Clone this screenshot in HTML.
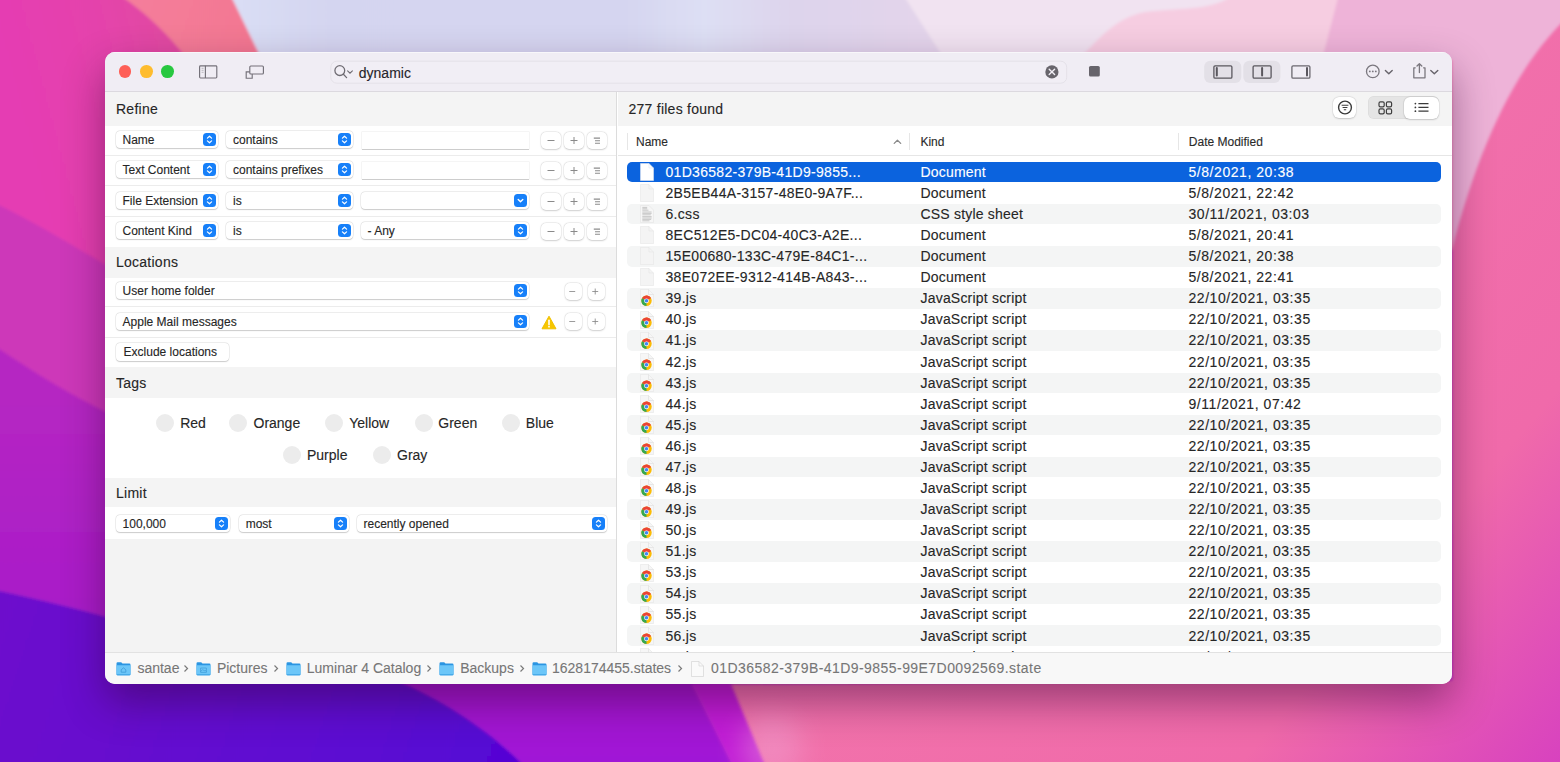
<!DOCTYPE html>
<html><head><meta charset="utf-8"><style>
*{margin:0;padding:0;box-sizing:border-box}
html,body{width:1560px;height:762px;overflow:hidden;font-family:"Liberation Sans",sans-serif;color:#262626}
#win div,#win span{-webkit-text-stroke:0.12px currentColor;font-variant-ligatures:none}
#win .bc{-webkit-text-stroke:0.1px currentColor}
#bg{position:absolute;left:0;top:0}
#win{position:absolute;left:105px;top:52px;width:1347px;height:632px;border-radius:10px;overflow:hidden;background:#f3f3f3;
 box-shadow:0 18px 40px rgba(50,0,50,0.45)}
.abs{position:absolute}
#tb{position:absolute;left:0;top:0;width:1347px;height:40px;background:#f0edf4;border-bottom:1px solid #dcd9df;box-shadow:inset 0 1px 0 rgba(255,255,255,0.55)}
.tl{position:absolute;top:13.4px;width:12.8px;height:12.8px;border-radius:50%}
#lp{position:absolute;left:0;top:40px;width:511.5px;height:560px;background:#f3f3f3}
#rp{position:absolute;left:512px;top:40px;width:835px;height:560px;background:#ffffff;border-left:1px solid #dedede}
.hdr{position:absolute;left:0;width:100%;background:#f4f4f4;font-size:14px;color:#262626}
.hdr span{position:absolute;left:11px;letter-spacing:0.25px}
.wrow{position:absolute;left:0;width:100%;background:#fff;border-bottom:1px solid #ececec}
.pop{position:absolute;background:#fff;border-radius:4px;box-shadow:0 0 0 0.5px rgba(0,0,0,0.10),0 0.8px 1.2px rgba(0,0,0,0.16)}
.pt{position:absolute;left:7px;top:2.1px;font-size:12px;color:#262626;white-space:nowrap}
.stp{position:absolute;right:2px;top:2px;width:13px;height:13px;border-radius:3.5px;background:#1780f9}
.stp svg{position:absolute;left:0;top:0}
.fld{position:absolute;height:17px;background:#fff;box-shadow:0 0 0 0.5px rgba(0,0,0,0.08),0 1px 0 rgba(0,0,0,0.16)}
.sb{position:absolute;background:#fff;border-radius:5px;box-shadow:0 0 0 0.5px rgba(0,0,0,0.07),0 0.6px 1.8px rgba(0,0,0,0.16)}
.sb svg{position:absolute;left:0;top:0}
.tag{position:absolute;font-size:14px;color:#262626}
.tag i{position:absolute;width:17.6px;height:17.6px;border-radius:50%;background:#ececec}
.row{position:absolute;left:10px;width:814px;height:20.6px;border-radius:5px;font-size:14px;color:#262626;white-space:nowrap}
.row.alt{background:#f4f5f5}
.row.sel{background:#0b63de;color:#fff}
.row .ic{position:absolute;left:11.5px;top:1.3px}
.row span{position:absolute;top:2.1px}
.c1{left:38.5px;letter-spacing:0.3px}
.c2{left:293.5px;letter-spacing:0.2px}
.c3{left:561.5px;letter-spacing:0.55px}
.colh{position:absolute;font-size:12px;color:#2a2a2a;white-space:nowrap}
.bc{position:absolute;font-size:14px;color:#767676;white-space:nowrap}
</style></head><body>
<svg id="bg" width="1560" height="762" viewBox="0 0 1560 762">
 <defs>
  <filter id="bl" x="-10%" y="-10%" width="120%" height="120%"><feGaussianBlur stdDeviation="1.5"/></filter>
  <filter id="bl2" x="-50%" y="-50%" width="200%" height="200%"><feGaussianBlur stdDeviation="14"/></filter>
  <linearGradient id="gL" x1="0" y1="0" x2="0" y2="1"><stop offset="0" stop-color="#e53db3"/><stop offset="1" stop-color="#e33ab2"/></linearGradient>
  <linearGradient id="gPink" gradientUnits="userSpaceOnUse" x1="900" y1="200" x2="1560" y2="762"><stop offset="0" stop-color="#f377ab"/><stop offset="0.72" stop-color="#f06aaa"/><stop offset="1" stop-color="#d842bf"/></linearGradient>
  <linearGradient id="gLav" gradientUnits="userSpaceOnUse" x1="228" y1="0" x2="950" y2="0"><stop offset="0" stop-color="#dadef5"/><stop offset="0.14" stop-color="#d4d5f0"/><stop offset="0.55" stop-color="#d5d5f0"/><stop offset="0.66" stop-color="#dddff4"/><stop offset="0.78" stop-color="#ddd4ec"/><stop offset="1" stop-color="#e4d4ea"/></linearGradient>
  <linearGradient id="gMag" gradientUnits="userSpaceOnUse" x1="0" y1="400" x2="0" y2="762"><stop offset="0" stop-color="#b526c2"/><stop offset="0.6" stop-color="#a81bc9"/><stop offset="1" stop-color="#a012d6"/></linearGradient>
  <linearGradient id="gPur" gradientUnits="userSpaceOnUse" x1="0" y1="600" x2="500" y2="762"><stop offset="0" stop-color="#6d10cc"/><stop offset="1" stop-color="#5506d4"/></linearGradient>
  <linearGradient id="gTL" gradientUnits="userSpaceOnUse" x1="0" y1="60" x2="190" y2="10"><stop offset="0" stop-color="#e53cb3"/><stop offset="0.55" stop-color="#e443ab"/><stop offset="1" stop-color="#df4b9d"/></linearGradient>
  <linearGradient id="gSal" gradientUnits="userSpaceOnUse" x1="120" y1="0" x2="260" y2="50"><stop offset="0" stop-color="#f47e9c"/><stop offset="1" stop-color="#f37690"/></linearGradient>
 </defs>
 <rect width="1560" height="762" fill="url(#gPink)"/>
 <g filter="url(#bl)">
 <path d="M-10 -10H1340L1320 60L1452 250L1452 680L692 684L735 770H-10Z" fill="url(#gMag)"/>
 <path d="M692 684L731 684L767 770L735 770Z" fill="#c11fd6"/>
 <path d="M-10 -10H250L275 60L110 268C80 250 40 225 -10 201Z" fill="url(#gTL)"/>
 <path d="M-10 201C40 225 80 250 110 268L110 414C70 395 30 370 -10 343Z" fill="#cd37b9"/>
 <path d="M-10 589Q60 604 110 618L395 680C445 700 495 735 528 770L-10 770Z" fill="url(#gPur)"/>
 <path d="M112 -10C140 8 165 30 188 60L270 60L240 -10Z" fill="url(#gSal)"/>
 <path d="M228 -10L905 -10L950 60L262 60Z" fill="url(#gLav)"/>
 <path d="M900 -10L1345 -10L1325 60L945 60Z" fill="#f1e3f1"/>
 <path d="M1078 60C1100 38 1115 18 1145 12C1180 8 1205 10 1225 0L1240 -10L1345 -10L1325 60Z" fill="#f6cde1"/>
 <path d="M1340 -10L1570 -10L1570 15C1520 60 1480 140 1452 250L1452 60L1322 60Z" fill="#eeb3d8"/>
 </g>
 <ellipse cx="772" cy="748" rx="30" ry="34" fill="#f0a8d8" opacity="0.4" filter="url(#bl2)"/>
</svg>
<div id="win">
 <div id="tb">
  <div class="tl" style="left:13.5px;background:#fe5f57"></div>
  <div class="tl" style="left:34.8px;background:#febc2e"></div>
  <div class="tl" style="left:55.8px;background:#28c840"></div>
  <svg class="abs" style="left:0;top:0" width="1347" height="40" viewBox="0 0 1347 40">
   <g fill="none" stroke="#747179" stroke-width="1.15">
    <rect x="94.6" y="13.8" width="17.2" height="12.2" rx="0.9"/>
    <path d="M100.4 13.8V26"/>
    <path d="M96.6 16.3H98.6M96.6 18.3H98.6M96.6 20.3H98.6" stroke="#b5b2b8" stroke-width="0.9"/>
    <rect x="144.8" y="14" width="13.6" height="8" rx="1"/>
    <path d="M144.8 19.8H141.2V26.2H147.2V22" />
   </g>
   <rect x="225.8" y="9.2" width="735.9" height="22" rx="6" fill="#f1eef5" stroke="#e4e1e8" stroke-width="1"/>
   <g fill="none" stroke="#6f6c73" stroke-width="1.3" stroke-linecap="round">
    <circle cx="234.8" cy="18.6" r="4.9"/>
    <path d="M238.4 22.3L241.6 25.6"/>
    <path d="M242.6 18.8L245 21.2L247.4 18.8" stroke-width="1.1"/>
   </g>
   <circle cx="946.9" cy="19.9" r="6.6" fill="#68656c"/>
   <path d="M944.2 17.2L949.6 22.6M949.6 17.2L944.2 22.6" stroke="#f1eef5" stroke-width="1.4" stroke-linecap="round"/>
   <rect x="984" y="14" width="10.8" height="10.5" rx="1.6" fill="#67646b"/>
   <rect x="1099.2" y="8.8" width="37.1" height="22.1" rx="6" fill="#e3e0e7"/>
   <rect x="1138.3" y="8.8" width="37.1" height="22.1" rx="6" fill="#e3e0e7"/>
   <g fill="none" stroke="#5a575e" stroke-width="1.3">
    <rect x="1108.9" y="13.8" width="18" height="12.4" rx="1.2"/>
    <rect x="1148.1" y="13.8" width="18" height="12.4" rx="1.2"/>
    <rect x="1186.9" y="13.8" width="18" height="12.4" rx="1.2" stroke="#6b686f"/>
   </g>
   <g stroke="#5a575e" stroke-width="2" stroke-linecap="round">
    <path d="M1111.8 16V23.6M1157.1 16V23.6M1202 16V23.6"/>
   </g>
   <g fill="none" stroke="#7a777e" stroke-width="1.3" stroke-linecap="round" stroke-linejoin="round">
    <circle cx="1267.8" cy="19.4" r="6.3"/>
    <path d="M1280.4 18.4L1283.8 21.8L1287.2 18.4" stroke="#67646b" stroke-width="1.4"/>
    <path d="M1310.2 15.8H1308.8V25.8H1320V15.8H1318.6"/>
    <path d="M1314.4 11.6V20.6M1312 14L1314.4 11.6L1316.8 14"/>
    <path d="M1325.8 18.4L1329.3 21.8L1332.8 18.4" stroke="#67646b" stroke-width="1.4"/>
   </g>
   <g fill="#7a777e"><circle cx="1264.8" cy="19.4" r="0.9"/><circle cx="1267.8" cy="19.4" r="0.9"/><circle cx="1270.8" cy="19.4" r="0.9"/></g>
  </svg>
  <div class="abs" style="left:253.8px;top:12.8px;font-size:14px;color:#26242a">dynamic</div>
 </div>
 
 <div class="abs" style="left:0;top:40px;width:511.5px;height:560.2px;background:#f3f3f3"></div>
 <div class="hdr" style="top:40px;height:33.5px;width:511.5px"><span style="top:8.5px">Refine</span></div>
 <div class="wrow" style="top:73.5px;height:30.4px;width:511.5px"></div>
 <div class="wrow" style="top:103.9px;height:30.4px;width:511.5px"></div>
 <div class="wrow" style="top:134.3px;height:30.4px;width:511.5px"></div>
 <div class="wrow" style="top:164.7px;height:30.3px;width:511.5px;border-bottom:none"></div>
 <div class="hdr" style="top:195px;height:30.5px;width:511.5px"><span style="top:7px">Locations</span></div>
 <div class="wrow" style="top:225.5px;height:29.5px;width:511.5px"></div>
 <div class="wrow" style="top:255px;height:30.5px;width:511.5px"></div>
 <div class="wrow" style="top:285.5px;height:29.5px;width:511.5px;border-bottom:none"></div>
 <div class="hdr" style="top:315px;height:31.3px;width:511.5px"><span style="top:7.5px">Tags</span></div>
 <div class="wrow" style="top:346.3px;height:79.9px;width:511.5px;border-bottom:none"></div>
 <div class="hdr" style="top:426.2px;height:29px;width:511.5px"><span style="top:6.5px">Limit</span></div>
 <div class="wrow" style="top:455.2px;height:31.4px;width:511.5px;border-bottom:none"></div>
 <div class="abs" style="left:511px;top:40px;width:1px;height:560.2px;background:#dcdcdc"></div>
 <div class="abs" style="left:512px;top:40px;width:835px;height:560.2px;background:#fff"></div>
 <div class="hdr" style="left:512.5px;top:40px;height:33.5px;width:834.5px"><span style="top:8.5px">277 files found</span></div>
 <div class="abs" style="left:512.5px;top:73.5px;width:834.5px;height:30px;background:#fff;border-bottom:1px solid #e6e6e6"></div>
 <div class="colh" style="left:531px;top:82.6px">Name</div>
 <div class="colh" style="left:815.4px;top:82.6px">Kind</div>
 <div class="colh" style="left:1083.8px;top:82.6px">Date Modified</div>
 <div class="abs" style="left:521.5px;top:81px;width:1px;height:16.8px;background:#e6e6e6"></div>
 <div class="abs" style="left:804.2px;top:81px;width:1px;height:16.8px;background:#e6e6e6"></div>
 <div class="abs" style="left:1072.7px;top:81px;width:1px;height:16.8px;background:#e6e6e6"></div>
 <svg class="abs" style="left:788px;top:86px" width="9" height="7" viewBox="0 0 9 7"><path d="M1.2 5.4L4.45 2.2L7.7 5.4" fill="none" stroke="#8a8a8a" stroke-width="1.3" stroke-linecap="round" stroke-linejoin="round"/></svg>
 <div class="abs" style="left:0;top:600.2px;width:1347px;height:31.8px;background:#f8f8f8;border-top:1px solid #e2e2e2"></div>
 <div class="sb" style="left:1228px;top:44.8px;width:23.3px;height:21.6px;border-radius:6px"></div>
 <div class="abs" style="left:1262.5px;top:44.4px;width:71.3px;height:22.4px;border-radius:6px;background:#e5e5e5;box-shadow:inset 0 0 0 0.5px rgba(0,0,0,0.06)"></div>
 <div class="sb" style="left:1299px;top:44.6px;width:34.6px;height:22px;border-radius:6px"></div>
 <svg class="abs" style="left:1200px;top:40px" width="147" height="34" viewBox="1200 40 147 34">
  <circle cx="1240" cy="55.5" r="6.4" fill="none" stroke="#3c3c3c" stroke-width="1.4"/>
  <path d="M1236.6 53.3H1243.4M1237.6 55.5H1242.4M1238.8 57.7H1241.2" stroke="#3c3c3c" stroke-width="1.1"/>
  <g fill="none" stroke="#3f3f3f" stroke-width="1.2">
   <rect x="1274" y="49.8" width="5.2" height="5" rx="1.4"/><rect x="1281.4" y="49.8" width="5.2" height="5" rx="1.4"/>
   <rect x="1274" y="56.9" width="5.2" height="5" rx="1.4"/><rect x="1281.4" y="56.9" width="5.2" height="5" rx="1.4"/>
  </g>
  <g stroke="#3a3a3a" stroke-width="1.3">
   <path d="M1313.4 51.6H1323.5M1313.4 55.4H1323.5M1313.4 59.2H1323.5"/>
  </g>
  <g fill="#3a3a3a"><circle cx="1310.4" cy="51.6" r="0.9"/><circle cx="1310.4" cy="55.4" r="0.9"/><circle cx="1310.4" cy="59.2" r="0.9"/></g>
 </svg>
 <div class="bc" style="left:32.4px;top:608.3px">santae</div>
 <div class="bc" style="left:111.9px;top:608.3px">Pictures</div>
 <div class="bc" style="left:201.8px;top:608.3px">Luminar 4 Catalog</div>
 <div class="bc" style="left:355.2px;top:608.3px">Backups</div>
 <div class="bc" style="left:447px;top:608.3px">1628174455.states</div>
 <div class="bc" style="left:606px;top:608.3px;letter-spacing:0.44px">01D36582-379B-41D9-9855-99E7D0092569.state</div>
 <svg class="abs" style="left:78px;top:612px" width="6" height="9" viewBox="0 0 6 9"><path d="M1.5 1.5L4.5 4.5L1.5 7.5" fill="none" stroke="#7a7a7a" stroke-width="1.2"/></svg>
 <svg class="abs" style="left:168px;top:612px" width="6" height="9" viewBox="0 0 6 9"><path d="M1.5 1.5L4.5 4.5L1.5 7.5" fill="none" stroke="#7a7a7a" stroke-width="1.2"/></svg>
 <svg class="abs" style="left:321px;top:612px" width="6" height="9" viewBox="0 0 6 9"><path d="M1.5 1.5L4.5 4.5L1.5 7.5" fill="none" stroke="#7a7a7a" stroke-width="1.2"/></svg>
 <svg class="abs" style="left:413.5px;top:612px" width="6" height="9" viewBox="0 0 6 9"><path d="M1.5 1.5L4.5 4.5L1.5 7.5" fill="none" stroke="#7a7a7a" stroke-width="1.2"/></svg>
 <svg class="abs" style="left:571.5px;top:612px" width="6" height="9" viewBox="0 0 6 9"><path d="M1.5 1.5L4.5 4.5L1.5 7.5" fill="none" stroke="#7a7a7a" stroke-width="1.2"/></svg>
 <svg class="abs" style="left:11.4px;top:609px" width="15" height="15" viewBox="0 0 15 15"><path d="M0.5 2.4Q0.5 1.2 1.7 1.2H5.2L6.5 2.6H13.3Q14.5 2.6 14.5 3.8V13Q14.5 14.2 13.3 14.2H1.7Q0.5 14.2 0.5 13Z" fill="#2b95e2"/><path d="M0.5 4.3H14.5V13Q14.5 14.2 13.3 14.2H1.7Q0.5 14.2 0.5 13Z" fill="#6cc6f8"/><path d="M0.8 13.7H14.2" stroke="#3aa0e4" stroke-width="0.9"/><path d="M5.2 8.8L7.5 6.8L9.8 8.8V11.2H5.2Z" fill="none" stroke="#3d9bd8" stroke-width="0.8"/></svg>
 <svg class="abs" style="left:91.1px;top:609px" width="15" height="15" viewBox="0 0 15 15"><path d="M0.5 2.4Q0.5 1.2 1.7 1.2H5.2L6.5 2.6H13.3Q14.5 2.6 14.5 3.8V13Q14.5 14.2 13.3 14.2H1.7Q0.5 14.2 0.5 13Z" fill="#2b95e2"/><path d="M0.5 4.3H14.5V13Q14.5 14.2 13.3 14.2H1.7Q0.5 14.2 0.5 13Z" fill="#6cc6f8"/><path d="M0.8 13.7H14.2" stroke="#3aa0e4" stroke-width="0.9"/><path d="M4.6 7H10.4V11.4H4.6Z M4.6 10.4L6.8 8.6L8.2 9.8L9 9.2L10.4 10.4" fill="none" stroke="#3d9bd8" stroke-width="0.7"/></svg>
 <svg class="abs" style="left:180.5px;top:609px" width="15" height="15" viewBox="0 0 15 15"><path d="M0.5 2.4Q0.5 1.2 1.7 1.2H5.2L6.5 2.6H13.3Q14.5 2.6 14.5 3.8V13Q14.5 14.2 13.3 14.2H1.7Q0.5 14.2 0.5 13Z" fill="#2b95e2"/><path d="M0.5 4.3H14.5V13Q14.5 14.2 13.3 14.2H1.7Q0.5 14.2 0.5 13Z" fill="#6cc6f8"/><path d="M0.8 13.7H14.2" stroke="#3aa0e4" stroke-width="0.9"/></svg>
 <svg class="abs" style="left:334.2px;top:609px" width="15" height="15" viewBox="0 0 15 15"><path d="M0.5 2.4Q0.5 1.2 1.7 1.2H5.2L6.5 2.6H13.3Q14.5 2.6 14.5 3.8V13Q14.5 14.2 13.3 14.2H1.7Q0.5 14.2 0.5 13Z" fill="#2b95e2"/><path d="M0.5 4.3H14.5V13Q14.5 14.2 13.3 14.2H1.7Q0.5 14.2 0.5 13Z" fill="#6cc6f8"/><path d="M0.8 13.7H14.2" stroke="#3aa0e4" stroke-width="0.9"/></svg>
 <svg class="abs" style="left:426.6px;top:609px" width="15" height="15" viewBox="0 0 15 15"><path d="M0.5 2.4Q0.5 1.2 1.7 1.2H5.2L6.5 2.6H13.3Q14.5 2.6 14.5 3.8V13Q14.5 14.2 13.3 14.2H1.7Q0.5 14.2 0.5 13Z" fill="#2b95e2"/><path d="M0.5 4.3H14.5V13Q14.5 14.2 13.3 14.2H1.7Q0.5 14.2 0.5 13Z" fill="#6cc6f8"/><path d="M0.8 13.7H14.2" stroke="#3aa0e4" stroke-width="0.9"/></svg>
 <svg class="abs" style="left:586px;top:608.5px" width="13" height="16" viewBox="0 0 13 16"><path d="M0.5 0.5H8L12.5 5V15.5H0.5Z" fill="#fafafa" stroke="#d6d6d6" stroke-width="0.7"/><path d="M8 0.5V5H12.5" fill="none" stroke="#d6d6d6" stroke-width="0.7"/></svg>
 <div class="abs" style="left:0;top:0;width:1347px;height:632px">
 <div class="pop" style="left:10.5px;top:78.8px;width:102.5px;height:17px"><span class="pt">Name</span><span class="stp"><svg width="13" height="13" viewBox="0 0 13 13"><path d="M4.4 5.1L6.5 3.2L8.6 5.1M4.4 7.9L6.5 9.8L8.6 7.9" fill="none" stroke="#fff" stroke-width="1.2" stroke-linecap="round" stroke-linejoin="round"/></svg></span></div>
<div class="pop" style="left:121px;top:78.8px;width:126.5px;height:17px"><span class="pt">contains</span><span class="stp"><svg width="13" height="13" viewBox="0 0 13 13"><path d="M4.4 5.1L6.5 3.2L8.6 5.1M4.4 7.9L6.5 9.8L8.6 7.9" fill="none" stroke="#fff" stroke-width="1.2" stroke-linecap="round" stroke-linejoin="round"/></svg></span></div>
<div class="fld" style="left:256.5px;top:79.8px;width:167.5px"></div>
<div class="sb" style="left:435.5px;top:79.7px;width:20px;height:17px"><svg width="20" height="17" viewBox="0 0 20 17"><path d="M6.5 8.5H13.5" stroke="#8a8a8a" stroke-width="1"/></svg></div>
<div class="sb" style="left:459px;top:79.7px;width:20px;height:17px"><svg width="20" height="17" viewBox="0 0 20 17"><path d="M6.5 8.5H13.5M10 5V12" stroke="#8a8a8a" stroke-width="1"/></svg></div>
<div class="sb" style="left:482px;top:79.7px;width:20px;height:17px"><svg width="20" height="17" viewBox="0 0 20 17"><path d="M6.8 6.1H13M8 8.7H13M8 11.3H13" stroke="#8c8c8c" stroke-width="1.1"/></svg></div>
<div class="pop" style="left:10.5px;top:109.2px;width:102.5px;height:17px"><span class="pt">Text Content</span><span class="stp"><svg width="13" height="13" viewBox="0 0 13 13"><path d="M4.4 5.1L6.5 3.2L8.6 5.1M4.4 7.9L6.5 9.8L8.6 7.9" fill="none" stroke="#fff" stroke-width="1.2" stroke-linecap="round" stroke-linejoin="round"/></svg></span></div>
<div class="pop" style="left:121px;top:109.2px;width:126.5px;height:17px"><span class="pt">contains prefixes</span><span class="stp"><svg width="13" height="13" viewBox="0 0 13 13"><path d="M4.4 5.1L6.5 3.2L8.6 5.1M4.4 7.9L6.5 9.8L8.6 7.9" fill="none" stroke="#fff" stroke-width="1.2" stroke-linecap="round" stroke-linejoin="round"/></svg></span></div>
<div class="fld" style="left:256.5px;top:110.2px;width:167.5px"></div>
<div class="sb" style="left:435.5px;top:110.10000000000001px;width:20px;height:17px"><svg width="20" height="17" viewBox="0 0 20 17"><path d="M6.5 8.5H13.5" stroke="#8a8a8a" stroke-width="1"/></svg></div>
<div class="sb" style="left:459px;top:110.10000000000001px;width:20px;height:17px"><svg width="20" height="17" viewBox="0 0 20 17"><path d="M6.5 8.5H13.5M10 5V12" stroke="#8a8a8a" stroke-width="1"/></svg></div>
<div class="sb" style="left:482px;top:110.10000000000001px;width:20px;height:17px"><svg width="20" height="17" viewBox="0 0 20 17"><path d="M6.8 6.1H13M8 8.7H13M8 11.3H13" stroke="#8c8c8c" stroke-width="1.1"/></svg></div>
<div class="pop" style="left:10.5px;top:139.60000000000002px;width:102.5px;height:17px"><span class="pt">File Extension</span><span class="stp"><svg width="13" height="13" viewBox="0 0 13 13"><path d="M4.4 5.1L6.5 3.2L8.6 5.1M4.4 7.9L6.5 9.8L8.6 7.9" fill="none" stroke="#fff" stroke-width="1.2" stroke-linecap="round" stroke-linejoin="round"/></svg></span></div>
<div class="pop" style="left:121px;top:139.60000000000002px;width:126.5px;height:17px"><span class="pt">is</span><span class="stp"><svg width="13" height="13" viewBox="0 0 13 13"><path d="M4.4 5.1L6.5 3.2L8.6 5.1M4.4 7.9L6.5 9.8L8.6 7.9" fill="none" stroke="#fff" stroke-width="1.2" stroke-linecap="round" stroke-linejoin="round"/></svg></span></div>
<div class="pop" style="left:255.5px;top:139.60000000000002px;width:168.5px;height:17px"><span class="pt"></span><span class="stp"><svg width="13" height="13" viewBox="0 0 13 13"><path d="M4.2 5.5L6.5 7.8L8.8 5.5" fill="none" stroke="#fff" stroke-width="1.4" stroke-linecap="round" stroke-linejoin="round"/></svg></span></div>
<div class="sb" style="left:435.5px;top:140.50000000000003px;width:20px;height:17px"><svg width="20" height="17" viewBox="0 0 20 17"><path d="M6.5 8.5H13.5" stroke="#8a8a8a" stroke-width="1"/></svg></div>
<div class="sb" style="left:459px;top:140.50000000000003px;width:20px;height:17px"><svg width="20" height="17" viewBox="0 0 20 17"><path d="M6.5 8.5H13.5M10 5V12" stroke="#8a8a8a" stroke-width="1"/></svg></div>
<div class="sb" style="left:482px;top:140.50000000000003px;width:20px;height:17px"><svg width="20" height="17" viewBox="0 0 20 17"><path d="M6.8 6.1H13M8 8.7H13M8 11.3H13" stroke="#8c8c8c" stroke-width="1.1"/></svg></div>
<div class="pop" style="left:10.5px;top:170.0px;width:102.5px;height:17px"><span class="pt">Content Kind</span><span class="stp"><svg width="13" height="13" viewBox="0 0 13 13"><path d="M4.4 5.1L6.5 3.2L8.6 5.1M4.4 7.9L6.5 9.8L8.6 7.9" fill="none" stroke="#fff" stroke-width="1.2" stroke-linecap="round" stroke-linejoin="round"/></svg></span></div>
<div class="pop" style="left:121px;top:170.0px;width:126.5px;height:17px"><span class="pt">is</span><span class="stp"><svg width="13" height="13" viewBox="0 0 13 13"><path d="M4.4 5.1L6.5 3.2L8.6 5.1M4.4 7.9L6.5 9.8L8.6 7.9" fill="none" stroke="#fff" stroke-width="1.2" stroke-linecap="round" stroke-linejoin="round"/></svg></span></div>
<div class="pop" style="left:255.5px;top:170.0px;width:168.5px;height:17px"><span class="pt">- Any</span><span class="stp"><svg width="13" height="13" viewBox="0 0 13 13"><path d="M4.4 5.1L6.5 3.2L8.6 5.1M4.4 7.9L6.5 9.8L8.6 7.9" fill="none" stroke="#fff" stroke-width="1.2" stroke-linecap="round" stroke-linejoin="round"/></svg></span></div>
<div class="sb" style="left:435.5px;top:170.9px;width:20px;height:17px"><svg width="20" height="17" viewBox="0 0 20 17"><path d="M6.5 8.5H13.5" stroke="#8a8a8a" stroke-width="1"/></svg></div>
<div class="sb" style="left:459px;top:170.9px;width:20px;height:17px"><svg width="20" height="17" viewBox="0 0 20 17"><path d="M6.5 8.5H13.5M10 5V12" stroke="#8a8a8a" stroke-width="1"/></svg></div>
<div class="sb" style="left:482px;top:170.9px;width:20px;height:17px"><svg width="20" height="17" viewBox="0 0 20 17"><path d="M6.8 6.1H13M8 8.7H13M8 11.3H13" stroke="#8c8c8c" stroke-width="1.1"/></svg></div>
<div class="pop" style="left:10.6px;top:230.3px;width:413.4px;height:17px"><span class="pt">User home folder</span><span class="stp"><svg width="13" height="13" viewBox="0 0 13 13"><path d="M4.4 5.1L6.5 3.2L8.6 5.1M4.4 7.9L6.5 9.8L8.6 7.9" fill="none" stroke="#fff" stroke-width="1.2" stroke-linecap="round" stroke-linejoin="round"/></svg></span></div>
<div class="pop" style="left:10.6px;top:260.7px;width:413.4px;height:17px"><span class="pt">Apple Mail messages</span><span class="stp"><svg width="13" height="13" viewBox="0 0 13 13"><path d="M4.4 5.1L6.5 3.2L8.6 5.1M4.4 7.9L6.5 9.8L8.6 7.9" fill="none" stroke="#fff" stroke-width="1.2" stroke-linecap="round" stroke-linejoin="round"/></svg></span></div>
<div class="sb" style="left:459.7px;top:230.5px;width:17.5px;height:17px"><svg width="17" height="17" viewBox="0 0 20 17"><path d="M5 8.5H12" stroke="#8a8a8a" stroke-width="1"/></svg></div>
<div class="sb" style="left:482.8px;top:230.5px;width:17.5px;height:17px"><svg width="17" height="17" viewBox="0 0 20 17"><path d="M5 8.5H12M8.5 5V12" stroke="#8a8a8a" stroke-width="1"/></svg></div>
<div class="sb" style="left:459.7px;top:261px;width:17.5px;height:17px"><svg width="17" height="17" viewBox="0 0 20 17"><path d="M5 8.5H12" stroke="#8a8a8a" stroke-width="1"/></svg></div>
<div class="sb" style="left:482.8px;top:261px;width:17.5px;height:17px"><svg width="17" height="17" viewBox="0 0 20 17"><path d="M5 8.5H12M8.5 5V12" stroke="#8a8a8a" stroke-width="1"/></svg></div>
<svg class="abs" style="left:436px;top:263px" width="16" height="15" viewBox="0 0 16 15"><path d="M8 1.2L15 13.8H1Z" fill="#f7c600" stroke="#f0c000" stroke-width="1" stroke-linejoin="round"/><path d="M8 5.2V9.6" stroke="#fff" stroke-width="1.6" stroke-linecap="round"/><circle cx="8" cy="11.7" r="0.9" fill="#fff"/></svg>
<div class="pop" style="left:10.6px;top:291.4px;width:113.8px;height:17.8px"><span class="pt" style="left:8px">Exclude locations</span></div>
<div class="tag" style="left:50.6px;top:361.9px;width:18px;height:18px;border-radius:50%;background:#ececec"></div>
<div class="tag" style="left:75.2px;top:362.9px">Red</div>
<div class="tag" style="left:124.2px;top:361.9px;width:18px;height:18px;border-radius:50%;background:#ececec"></div>
<div class="tag" style="left:148.5px;top:362.9px">Orange</div>
<div class="tag" style="left:219.9px;top:361.9px;width:18px;height:18px;border-radius:50%;background:#ececec"></div>
<div class="tag" style="left:244.2px;top:362.9px">Yellow</div>
<div class="tag" style="left:309.7px;top:361.9px;width:18px;height:18px;border-radius:50%;background:#ececec"></div>
<div class="tag" style="left:333.3px;top:362.9px">Green</div>
<div class="tag" style="left:396.5px;top:361.9px;width:18px;height:18px;border-radius:50%;background:#ececec"></div>
<div class="tag" style="left:420.8px;top:362.9px">Blue</div>
<div class="tag" style="left:177.7px;top:393.5px;width:18px;height:18px;border-radius:50%;background:#ececec"></div>
<div class="tag" style="left:202.0px;top:394.5px">Purple</div>
<div class="tag" style="left:267.8px;top:393.5px;width:18px;height:18px;border-radius:50%;background:#ececec"></div>
<div class="tag" style="left:292.0px;top:394.5px">Gray</div>
<div class="pop" style="left:10.6px;top:462.5px;width:114.2px;height:17px"><span class="pt">100,000</span><span class="stp"><svg width="13" height="13" viewBox="0 0 13 13"><path d="M4.4 5.1L6.5 3.2L8.6 5.1M4.4 7.9L6.5 9.8L8.6 7.9" fill="none" stroke="#fff" stroke-width="1.2" stroke-linecap="round" stroke-linejoin="round"/></svg></span></div>
<div class="pop" style="left:133.7px;top:462.5px;width:109.9px;height:17px"><span class="pt">most</span><span class="stp"><svg width="13" height="13" viewBox="0 0 13 13"><path d="M4.4 5.1L6.5 3.2L8.6 5.1M4.4 7.9L6.5 9.8L8.6 7.9" fill="none" stroke="#fff" stroke-width="1.2" stroke-linecap="round" stroke-linejoin="round"/></svg></span></div>
<div class="pop" style="left:251.5px;top:462.5px;width:250.8px;height:17px"><span class="pt">recently opened</span><span class="stp"><svg width="13" height="13" viewBox="0 0 13 13"><path d="M4.4 5.1L6.5 3.2L8.6 5.1M4.4 7.9L6.5 9.8L8.6 7.9" fill="none" stroke="#fff" stroke-width="1.2" stroke-linecap="round" stroke-linejoin="round"/></svg></span></div>
 </div>
 <div class="abs" style="left:512px;top:0;width:835px;height:600px;overflow:hidden">
 <div class="row sel" style="top:109.70px"><svg class="ic" width="15" height="18" viewBox="0 0 15 18"><path d="M1.5 0.5H10L14.5 5V17.5H1.5Z" fill="#ffffff" stroke="#dfe6f0" stroke-width="0.6"/><path d="M10 0.5V5H14.5" fill="none" stroke="#dfe6f0" stroke-width="0.6"/></svg><span class="c1">01D36582-379B-41D9-9855...</span><span class="c2">Document</span><span class="c3">5/8/2021, 20:38</span></div>
<div class="row" style="top:130.78px"><svg class="ic" width="15" height="18" viewBox="0 0 15 18"><path d="M1.5 0.5H10L14.5 5V17.5H1.5Z" fill="#f4f4f4" stroke="#e6e6e6" stroke-width="0.6"/><path d="M10 0.5V5H14.5" fill="none" stroke="#e6e6e6" stroke-width="0.6"/></svg><span class="c1">2B5EB44A-3157-48E0-9A7F...</span><span class="c2">Document</span><span class="c3">5/8/2021, 22:42</span></div>
<div class="row alt" style="top:151.86px"><svg class="ic" width="15" height="18" viewBox="0 0 15 18"><path d="M1.5 0.5H10L14.5 5V17.5H1.5Z" fill="#f6f6f6" stroke="#e4e4e4" stroke-width="0.6"/><g stroke="#b4b4b4" stroke-width="0.7"><path d="M3.3 2.4H8.2M3.3 3.8H8.2M3.3 5.2H9.5M3.3 7H12.6M3.3 8.4H12.6M3.3 9.8H11.8M3.3 11.6H12.6M3.3 13H12.6M3.3 14.4H12.2M3.3 15.8H10.5"/></g></svg><span class="c1">6.css</span><span class="c2">CSS style sheet</span><span class="c3">30/11/2021, 03:03</span></div>
<div class="row" style="top:172.94px"><svg class="ic" width="15" height="18" viewBox="0 0 15 18"><path d="M1.5 0.5H10L14.5 5V17.5H1.5Z" fill="#f4f4f4" stroke="#e6e6e6" stroke-width="0.6"/><path d="M10 0.5V5H14.5" fill="none" stroke="#e6e6e6" stroke-width="0.6"/></svg><span class="c1">8EC512E5-DC04-40C3-A2E...</span><span class="c2">Document</span><span class="c3">5/8/2021, 20:41</span></div>
<div class="row alt" style="top:194.02px"><svg class="ic" width="15" height="18" viewBox="0 0 15 18"><path d="M1.5 0.5H10L14.5 5V17.5H1.5Z" fill="#f4f4f4" stroke="#e6e6e6" stroke-width="0.6"/><path d="M10 0.5V5H14.5" fill="none" stroke="#e6e6e6" stroke-width="0.6"/></svg><span class="c1">15E00680-133C-479E-84C1-...</span><span class="c2">Document</span><span class="c3">5/8/2021, 20:38</span></div>
<div class="row" style="top:215.10px"><svg class="ic" width="15" height="18" viewBox="0 0 15 18"><path d="M1.5 0.5H10L14.5 5V17.5H1.5Z" fill="#f4f4f4" stroke="#e6e6e6" stroke-width="0.6"/><path d="M10 0.5V5H14.5" fill="none" stroke="#e6e6e6" stroke-width="0.6"/></svg><span class="c1">38E072EE-9312-414B-A843-...</span><span class="c2">Document</span><span class="c3">5/8/2021, 22:41</span></div>
<div class="row alt" style="top:236.18px"><svg class="ic" width="15" height="18" viewBox="0 0 15 18"><path d="M1.5 0.5H9.5L14.5 5.5V17.5H1.5Z" fill="#f6f6f6" stroke="#e6e6e6" stroke-width="0.6"/><path d="M9.5 0.5V5.5H14.5" fill="none" stroke="#dddddd" stroke-width="0.6"/><g transform="translate(7.5 11.8)"><path d="M0 -5.2A5.2 5.2 0 0 1 4.5 -2.6L0 -2.6Z" fill="#ea4335"/><circle r="5.2" fill="#fbbc04"/><path d="M0 0L-4.5 -2.6A5.2 5.2 0 0 1 4.5 -2.6Z" fill="#ea4335"/><path d="M0 0L-4.5 -2.6A5.2 5.2 0 0 0 0 5.2Z" fill="#34a853"/><circle r="2.4" fill="#ffffff"/><circle r="1.8" fill="#4285f4"/></g></svg><span class="c1">39.js</span><span class="c2">JavaScript script</span><span class="c3">22/10/2021, 03:35</span></div>
<div class="row" style="top:257.26px"><svg class="ic" width="15" height="18" viewBox="0 0 15 18"><path d="M1.5 0.5H9.5L14.5 5.5V17.5H1.5Z" fill="#f6f6f6" stroke="#e6e6e6" stroke-width="0.6"/><path d="M9.5 0.5V5.5H14.5" fill="none" stroke="#dddddd" stroke-width="0.6"/><g transform="translate(7.5 11.8)"><path d="M0 -5.2A5.2 5.2 0 0 1 4.5 -2.6L0 -2.6Z" fill="#ea4335"/><circle r="5.2" fill="#fbbc04"/><path d="M0 0L-4.5 -2.6A5.2 5.2 0 0 1 4.5 -2.6Z" fill="#ea4335"/><path d="M0 0L-4.5 -2.6A5.2 5.2 0 0 0 0 5.2Z" fill="#34a853"/><circle r="2.4" fill="#ffffff"/><circle r="1.8" fill="#4285f4"/></g></svg><span class="c1">40.js</span><span class="c2">JavaScript script</span><span class="c3">22/10/2021, 03:35</span></div>
<div class="row alt" style="top:278.34px"><svg class="ic" width="15" height="18" viewBox="0 0 15 18"><path d="M1.5 0.5H9.5L14.5 5.5V17.5H1.5Z" fill="#f6f6f6" stroke="#e6e6e6" stroke-width="0.6"/><path d="M9.5 0.5V5.5H14.5" fill="none" stroke="#dddddd" stroke-width="0.6"/><g transform="translate(7.5 11.8)"><path d="M0 -5.2A5.2 5.2 0 0 1 4.5 -2.6L0 -2.6Z" fill="#ea4335"/><circle r="5.2" fill="#fbbc04"/><path d="M0 0L-4.5 -2.6A5.2 5.2 0 0 1 4.5 -2.6Z" fill="#ea4335"/><path d="M0 0L-4.5 -2.6A5.2 5.2 0 0 0 0 5.2Z" fill="#34a853"/><circle r="2.4" fill="#ffffff"/><circle r="1.8" fill="#4285f4"/></g></svg><span class="c1">41.js</span><span class="c2">JavaScript script</span><span class="c3">22/10/2021, 03:35</span></div>
<div class="row" style="top:299.42px"><svg class="ic" width="15" height="18" viewBox="0 0 15 18"><path d="M1.5 0.5H9.5L14.5 5.5V17.5H1.5Z" fill="#f6f6f6" stroke="#e6e6e6" stroke-width="0.6"/><path d="M9.5 0.5V5.5H14.5" fill="none" stroke="#dddddd" stroke-width="0.6"/><g transform="translate(7.5 11.8)"><path d="M0 -5.2A5.2 5.2 0 0 1 4.5 -2.6L0 -2.6Z" fill="#ea4335"/><circle r="5.2" fill="#fbbc04"/><path d="M0 0L-4.5 -2.6A5.2 5.2 0 0 1 4.5 -2.6Z" fill="#ea4335"/><path d="M0 0L-4.5 -2.6A5.2 5.2 0 0 0 0 5.2Z" fill="#34a853"/><circle r="2.4" fill="#ffffff"/><circle r="1.8" fill="#4285f4"/></g></svg><span class="c1">42.js</span><span class="c2">JavaScript script</span><span class="c3">22/10/2021, 03:35</span></div>
<div class="row alt" style="top:320.50px"><svg class="ic" width="15" height="18" viewBox="0 0 15 18"><path d="M1.5 0.5H9.5L14.5 5.5V17.5H1.5Z" fill="#f6f6f6" stroke="#e6e6e6" stroke-width="0.6"/><path d="M9.5 0.5V5.5H14.5" fill="none" stroke="#dddddd" stroke-width="0.6"/><g transform="translate(7.5 11.8)"><path d="M0 -5.2A5.2 5.2 0 0 1 4.5 -2.6L0 -2.6Z" fill="#ea4335"/><circle r="5.2" fill="#fbbc04"/><path d="M0 0L-4.5 -2.6A5.2 5.2 0 0 1 4.5 -2.6Z" fill="#ea4335"/><path d="M0 0L-4.5 -2.6A5.2 5.2 0 0 0 0 5.2Z" fill="#34a853"/><circle r="2.4" fill="#ffffff"/><circle r="1.8" fill="#4285f4"/></g></svg><span class="c1">43.js</span><span class="c2">JavaScript script</span><span class="c3">22/10/2021, 03:35</span></div>
<div class="row" style="top:341.58px"><svg class="ic" width="15" height="18" viewBox="0 0 15 18"><path d="M1.5 0.5H9.5L14.5 5.5V17.5H1.5Z" fill="#f6f6f6" stroke="#e6e6e6" stroke-width="0.6"/><path d="M9.5 0.5V5.5H14.5" fill="none" stroke="#dddddd" stroke-width="0.6"/><g transform="translate(7.5 11.8)"><path d="M0 -5.2A5.2 5.2 0 0 1 4.5 -2.6L0 -2.6Z" fill="#ea4335"/><circle r="5.2" fill="#fbbc04"/><path d="M0 0L-4.5 -2.6A5.2 5.2 0 0 1 4.5 -2.6Z" fill="#ea4335"/><path d="M0 0L-4.5 -2.6A5.2 5.2 0 0 0 0 5.2Z" fill="#34a853"/><circle r="2.4" fill="#ffffff"/><circle r="1.8" fill="#4285f4"/></g></svg><span class="c1">44.js</span><span class="c2">JavaScript script</span><span class="c3">9/11/2021, 07:42</span></div>
<div class="row alt" style="top:362.66px"><svg class="ic" width="15" height="18" viewBox="0 0 15 18"><path d="M1.5 0.5H9.5L14.5 5.5V17.5H1.5Z" fill="#f6f6f6" stroke="#e6e6e6" stroke-width="0.6"/><path d="M9.5 0.5V5.5H14.5" fill="none" stroke="#dddddd" stroke-width="0.6"/><g transform="translate(7.5 11.8)"><path d="M0 -5.2A5.2 5.2 0 0 1 4.5 -2.6L0 -2.6Z" fill="#ea4335"/><circle r="5.2" fill="#fbbc04"/><path d="M0 0L-4.5 -2.6A5.2 5.2 0 0 1 4.5 -2.6Z" fill="#ea4335"/><path d="M0 0L-4.5 -2.6A5.2 5.2 0 0 0 0 5.2Z" fill="#34a853"/><circle r="2.4" fill="#ffffff"/><circle r="1.8" fill="#4285f4"/></g></svg><span class="c1">45.js</span><span class="c2">JavaScript script</span><span class="c3">22/10/2021, 03:35</span></div>
<div class="row" style="top:383.74px"><svg class="ic" width="15" height="18" viewBox="0 0 15 18"><path d="M1.5 0.5H9.5L14.5 5.5V17.5H1.5Z" fill="#f6f6f6" stroke="#e6e6e6" stroke-width="0.6"/><path d="M9.5 0.5V5.5H14.5" fill="none" stroke="#dddddd" stroke-width="0.6"/><g transform="translate(7.5 11.8)"><path d="M0 -5.2A5.2 5.2 0 0 1 4.5 -2.6L0 -2.6Z" fill="#ea4335"/><circle r="5.2" fill="#fbbc04"/><path d="M0 0L-4.5 -2.6A5.2 5.2 0 0 1 4.5 -2.6Z" fill="#ea4335"/><path d="M0 0L-4.5 -2.6A5.2 5.2 0 0 0 0 5.2Z" fill="#34a853"/><circle r="2.4" fill="#ffffff"/><circle r="1.8" fill="#4285f4"/></g></svg><span class="c1">46.js</span><span class="c2">JavaScript script</span><span class="c3">22/10/2021, 03:35</span></div>
<div class="row alt" style="top:404.82px"><svg class="ic" width="15" height="18" viewBox="0 0 15 18"><path d="M1.5 0.5H9.5L14.5 5.5V17.5H1.5Z" fill="#f6f6f6" stroke="#e6e6e6" stroke-width="0.6"/><path d="M9.5 0.5V5.5H14.5" fill="none" stroke="#dddddd" stroke-width="0.6"/><g transform="translate(7.5 11.8)"><path d="M0 -5.2A5.2 5.2 0 0 1 4.5 -2.6L0 -2.6Z" fill="#ea4335"/><circle r="5.2" fill="#fbbc04"/><path d="M0 0L-4.5 -2.6A5.2 5.2 0 0 1 4.5 -2.6Z" fill="#ea4335"/><path d="M0 0L-4.5 -2.6A5.2 5.2 0 0 0 0 5.2Z" fill="#34a853"/><circle r="2.4" fill="#ffffff"/><circle r="1.8" fill="#4285f4"/></g></svg><span class="c1">47.js</span><span class="c2">JavaScript script</span><span class="c3">22/10/2021, 03:35</span></div>
<div class="row" style="top:425.90px"><svg class="ic" width="15" height="18" viewBox="0 0 15 18"><path d="M1.5 0.5H9.5L14.5 5.5V17.5H1.5Z" fill="#f6f6f6" stroke="#e6e6e6" stroke-width="0.6"/><path d="M9.5 0.5V5.5H14.5" fill="none" stroke="#dddddd" stroke-width="0.6"/><g transform="translate(7.5 11.8)"><path d="M0 -5.2A5.2 5.2 0 0 1 4.5 -2.6L0 -2.6Z" fill="#ea4335"/><circle r="5.2" fill="#fbbc04"/><path d="M0 0L-4.5 -2.6A5.2 5.2 0 0 1 4.5 -2.6Z" fill="#ea4335"/><path d="M0 0L-4.5 -2.6A5.2 5.2 0 0 0 0 5.2Z" fill="#34a853"/><circle r="2.4" fill="#ffffff"/><circle r="1.8" fill="#4285f4"/></g></svg><span class="c1">48.js</span><span class="c2">JavaScript script</span><span class="c3">22/10/2021, 03:35</span></div>
<div class="row alt" style="top:446.98px"><svg class="ic" width="15" height="18" viewBox="0 0 15 18"><path d="M1.5 0.5H9.5L14.5 5.5V17.5H1.5Z" fill="#f6f6f6" stroke="#e6e6e6" stroke-width="0.6"/><path d="M9.5 0.5V5.5H14.5" fill="none" stroke="#dddddd" stroke-width="0.6"/><g transform="translate(7.5 11.8)"><path d="M0 -5.2A5.2 5.2 0 0 1 4.5 -2.6L0 -2.6Z" fill="#ea4335"/><circle r="5.2" fill="#fbbc04"/><path d="M0 0L-4.5 -2.6A5.2 5.2 0 0 1 4.5 -2.6Z" fill="#ea4335"/><path d="M0 0L-4.5 -2.6A5.2 5.2 0 0 0 0 5.2Z" fill="#34a853"/><circle r="2.4" fill="#ffffff"/><circle r="1.8" fill="#4285f4"/></g></svg><span class="c1">49.js</span><span class="c2">JavaScript script</span><span class="c3">22/10/2021, 03:35</span></div>
<div class="row" style="top:468.06px"><svg class="ic" width="15" height="18" viewBox="0 0 15 18"><path d="M1.5 0.5H9.5L14.5 5.5V17.5H1.5Z" fill="#f6f6f6" stroke="#e6e6e6" stroke-width="0.6"/><path d="M9.5 0.5V5.5H14.5" fill="none" stroke="#dddddd" stroke-width="0.6"/><g transform="translate(7.5 11.8)"><path d="M0 -5.2A5.2 5.2 0 0 1 4.5 -2.6L0 -2.6Z" fill="#ea4335"/><circle r="5.2" fill="#fbbc04"/><path d="M0 0L-4.5 -2.6A5.2 5.2 0 0 1 4.5 -2.6Z" fill="#ea4335"/><path d="M0 0L-4.5 -2.6A5.2 5.2 0 0 0 0 5.2Z" fill="#34a853"/><circle r="2.4" fill="#ffffff"/><circle r="1.8" fill="#4285f4"/></g></svg><span class="c1">50.js</span><span class="c2">JavaScript script</span><span class="c3">22/10/2021, 03:35</span></div>
<div class="row alt" style="top:489.14px"><svg class="ic" width="15" height="18" viewBox="0 0 15 18"><path d="M1.5 0.5H9.5L14.5 5.5V17.5H1.5Z" fill="#f6f6f6" stroke="#e6e6e6" stroke-width="0.6"/><path d="M9.5 0.5V5.5H14.5" fill="none" stroke="#dddddd" stroke-width="0.6"/><g transform="translate(7.5 11.8)"><path d="M0 -5.2A5.2 5.2 0 0 1 4.5 -2.6L0 -2.6Z" fill="#ea4335"/><circle r="5.2" fill="#fbbc04"/><path d="M0 0L-4.5 -2.6A5.2 5.2 0 0 1 4.5 -2.6Z" fill="#ea4335"/><path d="M0 0L-4.5 -2.6A5.2 5.2 0 0 0 0 5.2Z" fill="#34a853"/><circle r="2.4" fill="#ffffff"/><circle r="1.8" fill="#4285f4"/></g></svg><span class="c1">51.js</span><span class="c2">JavaScript script</span><span class="c3">22/10/2021, 03:35</span></div>
<div class="row" style="top:510.22px"><svg class="ic" width="15" height="18" viewBox="0 0 15 18"><path d="M1.5 0.5H9.5L14.5 5.5V17.5H1.5Z" fill="#f6f6f6" stroke="#e6e6e6" stroke-width="0.6"/><path d="M9.5 0.5V5.5H14.5" fill="none" stroke="#dddddd" stroke-width="0.6"/><g transform="translate(7.5 11.8)"><path d="M0 -5.2A5.2 5.2 0 0 1 4.5 -2.6L0 -2.6Z" fill="#ea4335"/><circle r="5.2" fill="#fbbc04"/><path d="M0 0L-4.5 -2.6A5.2 5.2 0 0 1 4.5 -2.6Z" fill="#ea4335"/><path d="M0 0L-4.5 -2.6A5.2 5.2 0 0 0 0 5.2Z" fill="#34a853"/><circle r="2.4" fill="#ffffff"/><circle r="1.8" fill="#4285f4"/></g></svg><span class="c1">53.js</span><span class="c2">JavaScript script</span><span class="c3">22/10/2021, 03:35</span></div>
<div class="row alt" style="top:531.30px"><svg class="ic" width="15" height="18" viewBox="0 0 15 18"><path d="M1.5 0.5H9.5L14.5 5.5V17.5H1.5Z" fill="#f6f6f6" stroke="#e6e6e6" stroke-width="0.6"/><path d="M9.5 0.5V5.5H14.5" fill="none" stroke="#dddddd" stroke-width="0.6"/><g transform="translate(7.5 11.8)"><path d="M0 -5.2A5.2 5.2 0 0 1 4.5 -2.6L0 -2.6Z" fill="#ea4335"/><circle r="5.2" fill="#fbbc04"/><path d="M0 0L-4.5 -2.6A5.2 5.2 0 0 1 4.5 -2.6Z" fill="#ea4335"/><path d="M0 0L-4.5 -2.6A5.2 5.2 0 0 0 0 5.2Z" fill="#34a853"/><circle r="2.4" fill="#ffffff"/><circle r="1.8" fill="#4285f4"/></g></svg><span class="c1">54.js</span><span class="c2">JavaScript script</span><span class="c3">22/10/2021, 03:35</span></div>
<div class="row" style="top:552.38px"><svg class="ic" width="15" height="18" viewBox="0 0 15 18"><path d="M1.5 0.5H9.5L14.5 5.5V17.5H1.5Z" fill="#f6f6f6" stroke="#e6e6e6" stroke-width="0.6"/><path d="M9.5 0.5V5.5H14.5" fill="none" stroke="#dddddd" stroke-width="0.6"/><g transform="translate(7.5 11.8)"><path d="M0 -5.2A5.2 5.2 0 0 1 4.5 -2.6L0 -2.6Z" fill="#ea4335"/><circle r="5.2" fill="#fbbc04"/><path d="M0 0L-4.5 -2.6A5.2 5.2 0 0 1 4.5 -2.6Z" fill="#ea4335"/><path d="M0 0L-4.5 -2.6A5.2 5.2 0 0 0 0 5.2Z" fill="#34a853"/><circle r="2.4" fill="#ffffff"/><circle r="1.8" fill="#4285f4"/></g></svg><span class="c1">55.js</span><span class="c2">JavaScript script</span><span class="c3">22/10/2021, 03:35</span></div>
<div class="row alt" style="top:573.46px"><svg class="ic" width="15" height="18" viewBox="0 0 15 18"><path d="M1.5 0.5H9.5L14.5 5.5V17.5H1.5Z" fill="#f6f6f6" stroke="#e6e6e6" stroke-width="0.6"/><path d="M9.5 0.5V5.5H14.5" fill="none" stroke="#dddddd" stroke-width="0.6"/><g transform="translate(7.5 11.8)"><path d="M0 -5.2A5.2 5.2 0 0 1 4.5 -2.6L0 -2.6Z" fill="#ea4335"/><circle r="5.2" fill="#fbbc04"/><path d="M0 0L-4.5 -2.6A5.2 5.2 0 0 1 4.5 -2.6Z" fill="#ea4335"/><path d="M0 0L-4.5 -2.6A5.2 5.2 0 0 0 0 5.2Z" fill="#34a853"/><circle r="2.4" fill="#ffffff"/><circle r="1.8" fill="#4285f4"/></g></svg><span class="c1">56.js</span><span class="c2">JavaScript script</span><span class="c3">22/10/2021, 03:35</span></div>
<div class="row" style="top:594.54px"><svg class="ic" width="15" height="18" viewBox="0 0 15 18"><path d="M1.5 0.5H9.5L14.5 5.5V17.5H1.5Z" fill="#f6f6f6" stroke="#e6e6e6" stroke-width="0.6"/><path d="M9.5 0.5V5.5H14.5" fill="none" stroke="#dddddd" stroke-width="0.6"/><g transform="translate(7.5 11.8)"><path d="M0 -5.2A5.2 5.2 0 0 1 4.5 -2.6L0 -2.6Z" fill="#ea4335"/><circle r="5.2" fill="#fbbc04"/><path d="M0 0L-4.5 -2.6A5.2 5.2 0 0 1 4.5 -2.6Z" fill="#ea4335"/><path d="M0 0L-4.5 -2.6A5.2 5.2 0 0 0 0 5.2Z" fill="#34a853"/><circle r="2.4" fill="#ffffff"/><circle r="1.8" fill="#4285f4"/></g></svg><span class="c1">57.js</span><span class="c2">JavaScript script</span><span class="c3">22/10/2021, 03:35</span></div>
 </div>
</div>
</body></html>
